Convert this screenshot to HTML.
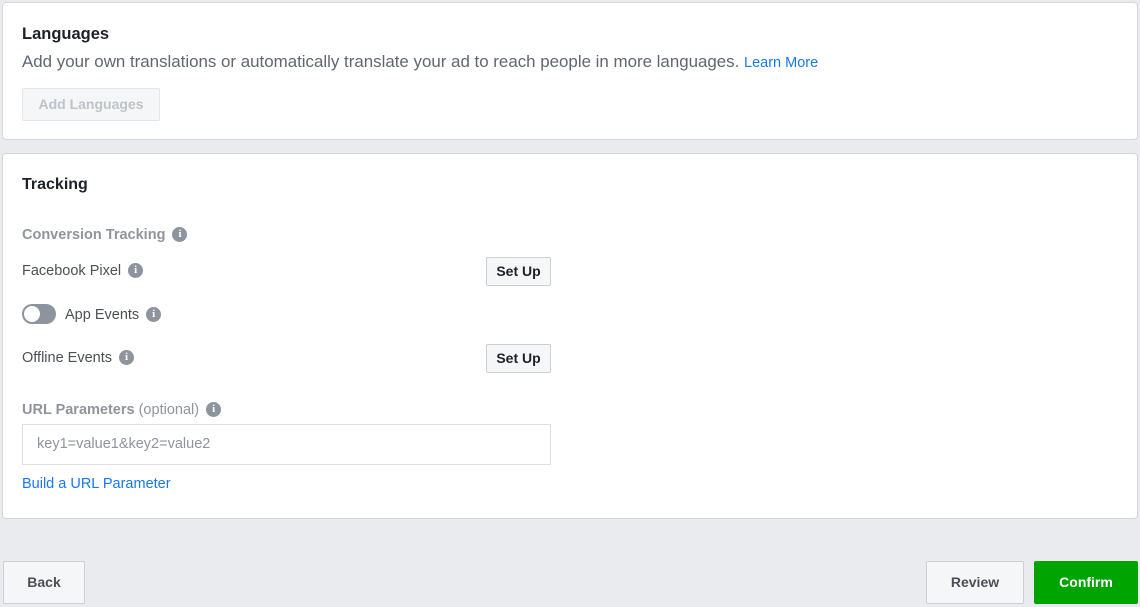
<!DOCTYPE html>
<html><head><style>
*{box-sizing:border-box;margin:0;padding:0}
body{width:1140px;height:607px;background:#e9ebee;font-family:"Liberation Sans",Arial,sans-serif;position:relative;overflow:hidden;color:#1d2129}
.card{position:absolute;left:2px;width:1136px;background:#fff;border:1px solid #d5d7db;border-radius:4px}
.abs{position:absolute;white-space:nowrap}
.info{display:inline-block;width:15px;height:15px;border-radius:50%;background:#8d949e;color:#fff;font:bold 11px/15px "Liberation Serif",serif;text-align:center;vertical-align:-1px;margin-left:3px;position:relative;top:-3px}
.btn{position:absolute;background:#f5f6f7;border:1px solid #ccd0d5;border-radius:2px;font-weight:bold;font-size:14px;color:#4b4f56;text-align:center}
</style></head><body>
<div class="card" style="top:2px;height:138px">
 <div class="abs" style="left:19px;top:22px;font-size:16.5px;font-weight:bold">Languages</div>
 <div class="abs" style="left:19px;top:49px;font-size:16.9px;color:#606770">Add your own translations or automatically translate your ad to reach people in more languages. <span style="color:#1877f2;font-size:14.5px">Learn More</span></div>
 <div class="abs" style="left:19px;top:85px;width:138px;height:33px;background:#f5f6f7;border:1px solid #e4e6e9;border-radius:2px;color:#bec3c9;font-weight:bold;font-size:14px;text-align:center;line-height:31px">Add Languages</div>
</div>
<div class="card" style="top:153px;height:366px">
 <div class="abs" style="left:19px;top:22px;font-size:16px;font-weight:bold">Tracking</div>
 <div class="abs" style="left:19px;top:73px;font-size:14.5px;font-weight:bold;color:#90949c">Conversion Tracking <span class="info">i</span></div>
 <div class="abs" style="left:19px;top:109px;font-size:14.5px;color:#4b4f56">Facebook Pixel <span class="info">i</span></div>
 <div class="btn" style="left:483px;top:103px;width:65px;height:29px;line-height:27px;color:#1d2129">Set Up</div>
 <div class="abs" style="left:19px;top:150px;width:34px;height:20px;border-radius:10px;background:#8d949e"><div style="position:absolute;left:2px;top:2px;width:16px;height:16px;border-radius:50%;background:#fff"></div></div>
 <div class="abs" style="left:62px;top:153px;font-size:14.5px;color:#4b4f56">App Events <span class="info">i</span></div>
 <div class="abs" style="left:19px;top:196px;font-size:14.5px;color:#4b4f56">Offline Events <span class="info">i</span></div>
 <div class="btn" style="left:483px;top:190px;width:65px;height:29px;line-height:27px;color:#1d2129">Set Up</div>
 <div class="abs" style="left:19px;top:248px;font-size:14.5px;color:#90949c"><b>URL Parameters</b> (optional) <span class="info">i</span></div>
 <div class="abs" style="left:19px;top:270px;width:529px;height:41px;border:1px solid #dddfe2;font-size:14.5px;color:#90949c;line-height:39px;padding-left:14px">key1=value1&amp;key2=value2</div>
 <div class="abs" style="left:19px;top:322px;font-size:14.5px;color:#1877f2">Build a URL Parameter</div>
</div>
<div class="btn" style="left:3px;top:561px;width:82px;height:43px;line-height:41px">Back</div>
<div class="btn" style="left:926px;top:561px;width:98px;height:43px;line-height:41px">Review</div>
<div class="btn" style="left:1034px;top:561px;width:104px;height:43px;line-height:41px;background:#00a400;border-color:#00a400;color:#fff">Confirm</div>
</body></html>
